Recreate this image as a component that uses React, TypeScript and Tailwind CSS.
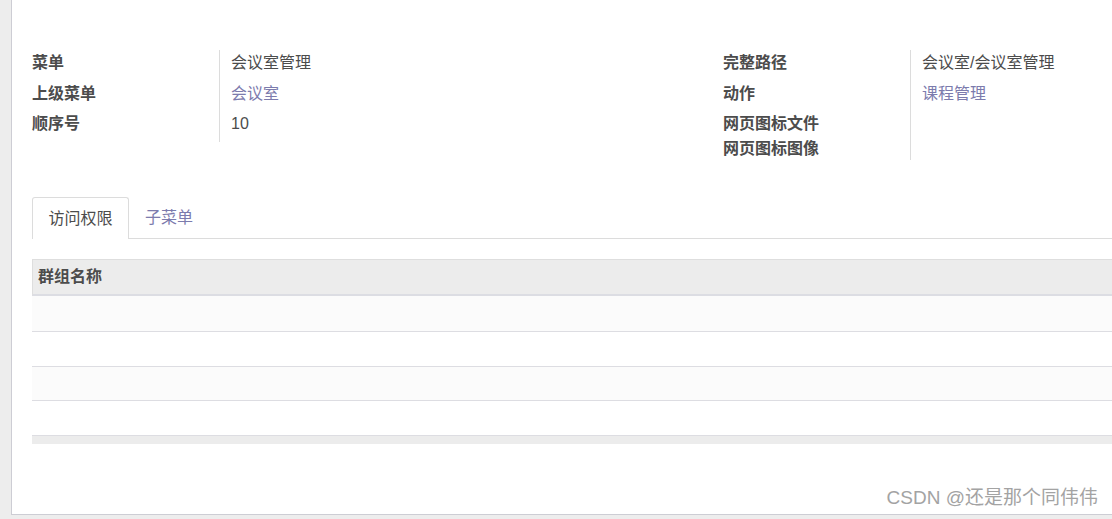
const font = { fontFamily: '"Liberation Sans", "Noto Sans CJK SC", sans-serif' };

type Row = { label: string; value?: string; link?: boolean; h: string };

const leftRows: Row[] = [
  { label: "菜单", value: "会议室管理", h: "h-[31px]" },
  { label: "上级菜单", value: "会议室", link: true, h: "h-[30px]" },
  { label: "顺序号", value: "10", h: "h-[33px]" },
];

const rightRows: Row[] = [
  { label: "完整路径", value: "会议室/会议室管理", h: "h-[31px]" },
  { label: "动作", value: "课程管理", link: true, h: "h-[30px]" },
  { label: "网页图标文件", h: "h-[25px]" },
  { label: "网页图标图像", h: "h-[26px]" },
];

function FieldGroup({ rows }: { rows: Row[] }) {
  return (
    <div className="flex">
      <div className="w-[187px] flex flex-col">
        {rows.map((r) => (
          <div key={r.label} className={`${r.h} pt-[4px] leading-[22px] font-bold text-[#4c4c4c]`}>
            {r.label}
          </div>
        ))}
      </div>
      <div className="flex flex-col border-l border-[#dcdcdc] pl-[11px] mt-[2px]">
        {rows.map((r, i) => (
          <div
            key={r.label}
            className={`${r.h} ${i === 0 ? "-mt-[2px]" : ""} pt-[4px] leading-[22px] ${r.link ? "text-[#7c7bad]" : "text-[#4c4c4c]"}`}
          >
            {r.value}
          </div>
        ))}
      </div>
    </div>
  );
}

export default function App() {
  return (
    <div className="w-[1112px] h-[519px] overflow-hidden bg-[#ededed] text-[16px]" style={font}>
      <div className="ml-[11px] h-[515px] bg-white border-l border-b border-[#cdcdd4] overflow-hidden">
        <div className="pl-[20px] pt-[48px]">
          <div className="flex">
            <div className="w-[691px]">
              <FieldGroup rows={leftRows} />
            </div>
            <FieldGroup rows={rightRows} />
          </div>

          <div className="mt-[37px] flex border-b border-[#dcdcdc] h-[42px]">
            <div className="w-[97px] h-[42px] -mb-px rounded-t-[3px] border border-b-0 border-[#dcdcdc] bg-white flex items-center justify-center text-[#4c4c4c]">
              访问权限
            </div>
            <div className="px-[16px] flex items-center text-[#7c7bad]">子菜单</div>
          </div>

          <div className="mt-[20px] w-[1200px]">
            <div className="h-[37px] bg-[#ececec] border-t border-l border-[#dedede] border-b-2 border-b-[#dcdde3] flex items-center pl-[5px] font-bold text-[#4c4c4c]">
              群组名称
            </div>
            <div className="h-[36px] bg-[#fbfbfb] border-b border-[#dddde2]" />
            <div className="h-[35px] bg-white border-b border-[#dddde2]" />
            <div className="h-[34px] bg-[#fbfbfb] border-b border-[#dddde2]" />
            <div className="h-[35px] bg-white border-b border-[#dddde2]" />
            <div className="h-[8px] bg-[#ececec]" />
          </div>
        </div>
        <div className="flex justify-end pr-[14px] mt-[42px]">
          <span className="text-[19px] text-[#a3a3a3] leading-[24px] [text-shadow:0_0_1px_#fff]">
            CSDN @还是那个同伟伟
          </span>
        </div>
      </div>
    </div>
  );
}
